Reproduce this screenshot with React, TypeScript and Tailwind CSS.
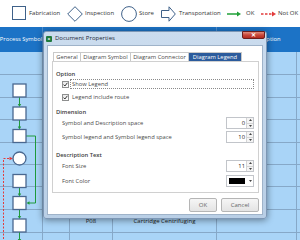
import React from "react";

const rowHeights = [
  "h-[23px]",
  "h-[23px]",
  "h-[22px]",
  "h-[23px]",
  "h-[22px]",
  "h-[22px]",
  "h-[23px]",
  "h-[23px]",
  "h-[23px]",
];

const cell = "border-r border-b border-[#86a8c8]";

function LegendBar() {
  return (
    <div className="flex h-[27px] items-center bg-white pl-[12px] text-[6px] text-[#333]">
      <svg width="14" height="15" viewBox="0 0 14 15">
        <rect x="0.5" y="0.5" width="13" height="13" fill="white" stroke="#3f6189" />
      </svg>
      <span className="ml-[3px] w-[29px]">Fabrication</span>
      <svg className="ml-[9px]" width="16" height="16" viewBox="0 0 16 16">
        <polygon points="8,0.7 15.3,8 8,15.3 0.7,8" fill="white" stroke="#3f6189" />
      </svg>
      <span className="ml-[2px] w-[26px]">Inspection</span>
      <svg className="ml-[10px]" width="16" height="16" viewBox="0 0 16 16">
        <circle cx="8" cy="8" r="7.4" fill="white" stroke="#3f6189" />
      </svg>
      <span className="ml-[2px] w-[14px]">Store</span>
      <svg className="ml-[8px]" width="15" height="16" viewBox="0 0 15 16">
        <polygon
          points="0.5,4.5 8,4.5 8,0.8 14.3,8 8,15.2 8,11.5 0.5,11.5"
          fill="white"
          stroke="#3f6189"
        />
      </svg>
      <span className="ml-[3px] w-[38px]">Transportation</span>
      <svg className="ml-[10px]" width="14" height="6" viewBox="0 0 14 6">
        <line x1="0" y1="3" x2="10" y2="3" stroke="#21a038" strokeWidth="1.5" />
        <polygon points="10,0.5 14,3 10,5.5" fill="#21a038" />
      </svg>
      <span className="ml-[5px] w-[8px]">OK</span>
      <svg className="ml-[7px]" width="15" height="6" viewBox="0 0 15 6">
        <line
          x1="0"
          y1="3"
          x2="11"
          y2="3"
          stroke="#e23b3b"
          strokeWidth="1.3"
          strokeDasharray="2.5 1.5"
        />
        <polygon points="11,0.5 15,3 11,5.5" fill="#e23b3b" />
      </svg>
      <span className="ml-[2px]">Not OK</span>
    </div>
  );
}

function Flowchart() {
  const boxes = [63.5, 86.5, 109, 154, 176, 198.5, 221.5];
  const arrows: [number, number][] = [
    [63.5, 86.5],
    [86.5, 109],
    [154, 176],
    [176, 198.5],
    [198.5, 221.5],
    [221.5, 244],
  ];
  return (
    <svg
      className="pointer-events-none absolute left-0 top-[52px]"
      width="43"
      height="188"
      viewBox="0 52 43 188"
    >
      {arrows.map(([a, b], i) => (
        <g key={i}>
          <line x1="19.5" y1={a + 6.5} x2="19.5" y2={b - 9} stroke="#1f9a3c" strokeWidth="1" />
          <polygon
            points={`17.8,${b - 9.5} 21.2,${b - 9.5} 19.5,${b - 6.5}`}
            fill="#1f9a3c"
          />
        </g>
      ))}
      <polyline points="26,109 35.5,109 35.5,176 29,176" fill="none" stroke="#1f9a3c" strokeWidth="1" />
      <polygon points="29.5,174.3 29.5,177.7 26.5,176" fill="#1f9a3c" />
      <polyline
        points="3.5,240 3.5,131.5 10,131.5"
        fill="none"
        stroke="#e23b3b"
        strokeWidth="1"
        strokeDasharray="2 1.5"
      />
      <polygon points="9.5,129.8 9.5,133.2 13,131.5" fill="#e23b3b" />
      {boxes.map((cy, i) => (
        <rect
          key={i}
          x="13"
          y={cy - 6.5}
          width="13"
          height="13"
          fill="white"
          stroke="#4a6890"
          strokeWidth="1.3"
        />
      ))}
      <circle cx="19.5" cy="131.5" r="6.5" fill="white" stroke="#4a6890" strokeWidth="1.3" />
      <circle cx="19.5" cy="244" r="6.5" fill="white" stroke="#4a6890" strokeWidth="1.3" />
    </svg>
  );
}

function Table() {
  return (
    <div className="relative">
      <div className="grid h-[25px] grid-cols-[43px_27px_43px_104px_80px_1fr] bg-[#1c73c6] text-[5.8px] text-white">
        <div className="flex items-center justify-center border-r border-[#4f8fd0] whitespace-nowrap">
          Process Symbol
        </div>
        <div />
        <div />
        <div className="border-r border-[#4f8fd0]" />
        <div className="flex items-center justify-center pl-[16px]">Description</div>
        <div />
      </div>
      <div className="bg-[#a9d4f7] text-[6px] text-[#222]">
        {rowHeights.map((h, i) => (
          <div key={i} className={`grid grid-cols-[43px_27px_43px_104px_80px_1fr] ${h}`}>
            <div className={cell} />
            <div className={cell} />
            <div className={`${cell} flex items-center justify-center`}>{i === 7 ? "P08" : ""}</div>
            <div className={`${cell} flex items-center justify-center`}>
              {i === 7 ? "Cartridge Centrifuging" : ""}
            </div>
            <div className={cell} />
            <div className="border-b border-[#86a8c8]" />
          </div>
        ))}
      </div>
      <Flowchart />
    </div>
  );
}

function Check() {
  return (
    <span className="flex h-[7px] w-[7px] items-center justify-center border border-[#8e8f8f] bg-gradient-to-br from-[#e6e6e6] to-white">
      <svg width="5" height="5" viewBox="0 0 5 5">
        <polyline points="0.6,2.6 1.9,4 4.4,0.8" fill="none" stroke="#333" strokeWidth="1" />
      </svg>
    </span>
  );
}

function Spinner({ value }: { value: string }) {
  return (
    <div className="flex h-[12px] w-[28px] border border-[#c2c5ca] bg-white">
      <div className="flex-1 pr-[1px] text-right leading-[10px] text-[#222]">{value}</div>
      <div className="flex w-[7px] flex-col border-l border-[#d4d4d4]">
        <div className="flex flex-1 items-center justify-center border-b border-[#d4d4d4] bg-[#f4f4f4]">
          <svg width="3" height="2" viewBox="0 0 3 2">
            <polygon points="0,2 3,2 1.5,0" fill="#444" />
          </svg>
        </div>
        <div className="flex flex-1 items-center justify-center bg-[#f4f4f4]">
          <svg width="3" height="2" viewBox="0 0 3 2">
            <polygon points="0,0 3,0 1.5,2" fill="#444" />
          </svg>
        </div>
      </div>
    </div>
  );
}

function ColorBox() {
  return (
    <div className="flex h-[12px] w-[28px] items-center border border-[#c2c5ca] bg-white pl-[2px]">
      <span className="h-[6px] w-[16px] bg-black" />
      <svg className="ml-[4px]" width="3" height="2" viewBox="0 0 3 2">
        <polygon points="0,0 3,0 1.5,2" fill="#444" />
      </svg>
    </div>
  );
}

function Dialog() {
  const tabs = ["General", "Diagram Symbol", "Diagram Connector", "Diagram Legend"];
  const widths = ["w-[28px]", "w-[50px]", "w-[58px]", "w-[53px]"];
  return (
    <div className="absolute left-[43px] top-[31px] flex h-[188px] w-[224px] flex-col rounded-[3px] border border-[#7d97b5] bg-gradient-to-b from-[#cbdcee] to-[#b9cfe6] shadow-[0_1px_7px_rgba(0,0,0,0.45)]">
      <div className="relative flex h-[13px] items-center pl-[2px]">
        <span className="flex h-[6px] w-[6px] items-center justify-center rounded-[1px] bg-[#1f7a3e] text-[4px] font-bold leading-none text-white">
          x
        </span>
        <span className="ml-[3px] text-[6px] text-[#1e2a3a]">Document Properties</span>
        <div className="absolute right-[1px] top-[-1px] flex h-[8px] w-[23px] items-center justify-center rounded-b-[2px] border border-[#6b1d1d] bg-gradient-to-b from-[#e08c7e] via-[#c8463a] to-[#b12a1f] text-[6px] font-bold leading-none text-white">
          ✕
        </div>
      </div>
      <div className="mx-[3px] flex h-[170px] flex-col border border-[#9fb3c9] bg-white pl-[4px] pr-[3px] pt-[6px] text-[5.8px] text-[#4a4a4a]">
        <div className="ml-[1px] flex h-[9px]">
          {tabs.map((t, i) => (
            <div
              key={t}
              className={`${widths[i]} flex items-center justify-center border-t border-r border-[#c9c9c9] ${
                i === 0 ? "border-l" : ""
              } ${i === 3 ? "bg-[#2b5b9c] text-white" : "bg-white"}`}
            >
              {t}
            </div>
          ))}
        </div>
        <div className="flex h-[132px] flex-col border border-[#d0d0d0] pl-[3px] pr-[4px]">
          <div className="mt-[7px] flex h-[10px] items-center font-semibold text-[#3c3c3c]">Option</div>
          <div className="ml-[6px] flex h-[10px] items-center">
            <Check />
            <span className="ml-[1px] flex h-[10px] flex-1 items-center border border-dotted border-[#8a8a8a] pl-[1px]">
              Show Legend
            </span>
          </div>
          <div className="ml-[6px] mt-[3px] flex h-[10px] items-center">
            <Check />
            <span className="ml-[2px] pl-[1px]">Legend include route</span>
          </div>
          <div className="mt-[5px] flex h-[10px] items-center font-semibold text-[#3c3c3c]">Dimension</div>
          <div className="flex h-[12px] items-center justify-between pl-[6px]">
            <span>Symbol and Description space</span>
            <Spinner value="0" />
          </div>
          <div className="mt-[2px] flex h-[12px] items-center justify-between pl-[6px]">
            <span>Symbol legend and Symbol legend space</span>
            <Spinner value="10" />
          </div>
          <div className="mt-[7px] flex h-[10px] items-center font-semibold text-[#3c3c3c]">
            Description Text
          </div>
          <div className="flex h-[12px] items-center justify-between pl-[6px]">
            <span>Font Size</span>
            <Spinner value="11" />
          </div>
          <div className="mt-[3px] flex h-[12px] items-center justify-between pl-[6px]">
            <span>Font Color</span>
            <ColorBox />
          </div>
        </div>
        <div className="mt-[5px] flex justify-end gap-[4px]">
          <button className="h-[14px] w-[28px] rounded-[2px] border border-[#b5b5b5] bg-gradient-to-b from-[#f6f6f6] to-[#e4e4e4] text-[6px] text-[#666]">
            OK
          </button>
          <button className="h-[14px] w-[38px] rounded-[2px] border border-[#b5b5b5] bg-gradient-to-b from-[#f6f6f6] to-[#e4e4e4] text-[6px] text-[#666]">
            Cancel
          </button>
        </div>
      </div>
    </div>
  );
}

export default function App() {
  return (
    <div className="relative h-[240px] w-[300px] overflow-hidden bg-white font-['Open_Sans',sans-serif]">
      <LegendBar />
      <Table />
      <Dialog />
    </div>
  );
}
